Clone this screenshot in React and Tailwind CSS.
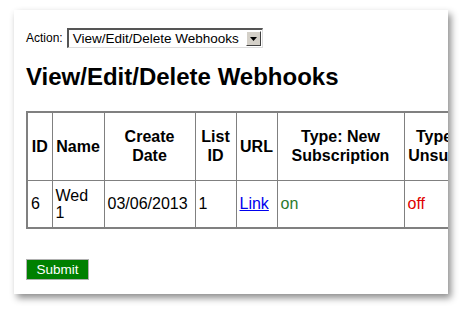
import React from 'react';

const headers = [
    { label: 'ID', width: 25 },
    { label: 'Name', width: 52 },
    { label: 'Create Date', width: 91 },
    { label: 'List ID', width: 41 },
    { label: 'URL', width: 41 },
    { label: 'Type: New Subscription', width: 127 },
    { label: 'Type: User Unsubscribe', width: 106 },
];

function ActionSelect() {
    return (
        <div className="flex items-center">
            <span className="text-[12px] text-black mr-[4px]">Action:</span>
            <div className="flex items-center h-[20px] w-[196px] bg-white border-t-2 border-l-2 border-b border-r border-t-[#555] border-l-[#555] border-b-[#ddd] border-r-[#ddd]">
                <span className="flex-1 pl-[4px] text-[13.5px] leading-none text-black whitespace-nowrap">
                    View/Edit/Delete Webhooks
                </span>
                <div className="w-[15px] h-[15px] mr-[1px] shrink-0 bg-[#d4d0c8] border border-t-white border-l-white border-b-[#404040] border-r-[#404040] flex items-center justify-center">
                    <svg width="7" height="4" viewBox="0 0 7 4">
                        <path d="M0 0h7L3.5 4z" fill="#000" />
                    </svg>
                </div>
            </div>
        </div>
    );
}

function WebhooksTable() {
    return (
        <table className="table-fixed border-collapse border-2 border-[#808080] text-[16px] text-black" style={{ width: 483 }}>
            <colgroup>
                {headers.map((h) => (
                    <col key={h.label} style={{ width: h.width }} />
                ))}
            </colgroup>
            <thead>
                <tr className="h-[68px]">
                    {headers.map((h) => (
                        <th key={h.label} className="border border-[#808080] px-[3px] font-bold text-center align-middle leading-[19px]">
                            {h.label}
                        </th>
                    ))}
                </tr>
            </thead>
            <tbody>
                <tr className="h-[48px]">
                    <td className="border border-[#808080] px-[3px]">6</td>
                    <td className="border border-[#808080] px-[3px] leading-[17px]">Wed 1</td>
                    <td className="border border-[#808080] px-[3px]">03/06/2013</td>
                    <td className="border border-[#808080] px-[3px]">1</td>
                    <td className="border border-[#808080] px-[3px]">
                        <a href="#" className="text-[#0000ee] underline">Link</a>
                    </td>
                    <td className="border border-[#808080] px-[3px] text-[#2a7a2a]">on</td>
                    <td className="border border-[#808080] px-[3px] text-[#e00000]">off</td>
                </tr>
            </tbody>
        </table>
    );
}

export default function App() {
    return (
        <div className="w-[462px] h-[312px] bg-white pt-[10px] pl-[14px] font-['Liberation_Sans',Arial,sans-serif]">
            <div className="w-[434px] h-[284px] bg-white overflow-hidden shadow-[3px_4px_7px_rgba(0,0,0,0.45)] pl-[12px] pt-[18px]">
                <ActionSelect />
                <h1 className="mt-[15px] text-[24px] font-bold leading-[28px] text-black whitespace-nowrap">
                    View/Edit/Delete Webhooks
                </h1>
                <div className="mt-[20px]">
                    <WebhooksTable />
                </div>
                <button className="mt-[30px] w-[63px] h-[21px] bg-[#008000] text-white text-[13.5px] leading-none border border-[#b0b0b0]">
                    Submit
                </button>
            </div>
        </div>
    );
}
